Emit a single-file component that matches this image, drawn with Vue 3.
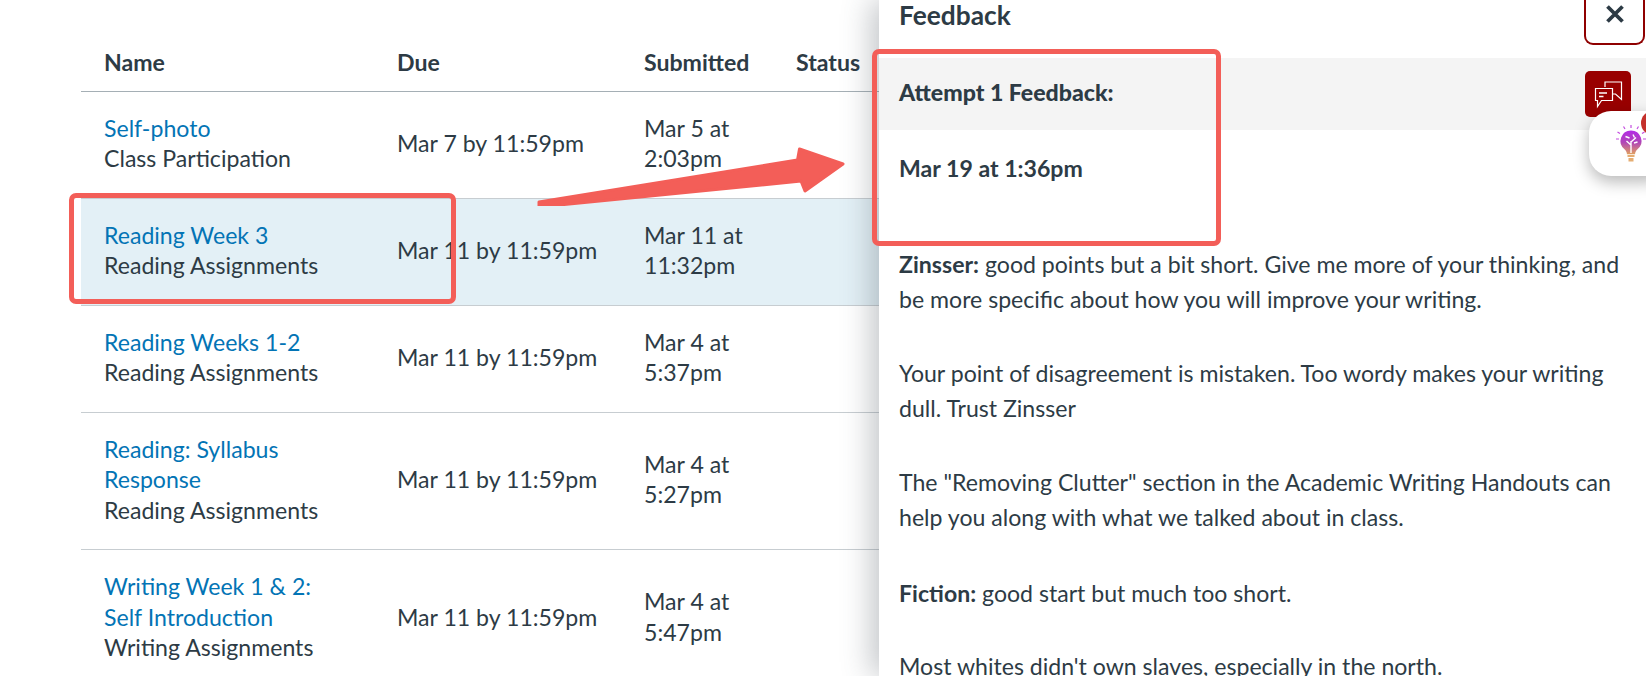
<template>
  <div class="page">
    <section class="grades">
      <div class="row head">
        <div>Name</div>
        <div>Due</div>
        <div>Submitted</div>
        <div>Status</div>
      </div>
      <div
        v-for="item in assignments"
        :key="item.title"
        class="row"
        :class="{ active: item.active }"
      >
        <div>
          <a class="link">{{ item.title }}</a>
          <div>{{ item.group }}</div>
        </div>
        <div>{{ item.due }}</div>
        <div class="submitted">{{ item.submitted }}</div>
        <div></div>
      </div>
    </section>

    <aside class="drawer">
      <header class="drawer-head">
        <h2>Feedback</h2>
        <button class="close" aria-label="Close">
          <svg width="22" height="22" viewBox="0 0 22 22">
            <path d="M3.500 3.500 18.500 18.500M18.500 3.500 3.500 18.500" stroke="#2d3b45" stroke-width="3.800" fill="none" />
          </svg>
        </button>
      </header>
      <div class="attempt">
        <strong>Attempt 1 Feedback:</strong>
        <button class="comment" aria-label="Comments">
          <svg width="46" height="46" viewBox="0 0 46 46" fill="none" stroke="#fff" stroke-width="1.200">
            <path d="M20 16v-5h16.500v17.500l-6-5.500h-2.500" />
            <path d="M10.500 17.500h17v12h-11l-4 6v-6h-2z" />
            <path d="M14 22h8M14 25.500h4.500" stroke-width="1.400" />
          </svg>
        </button>
      </div>
      <div class="date">Mar 19 at 1:36pm</div>
      <div class="comments">
        <p><b>Zinsser:</b> good points but a bit short. Give me more of your thinking, and be more specific about how you will improve your writing.</p>
        <p>Your point of disagreement is mistaken. Too wordy makes your writing dull. Trust Zinsser</p>
        <p class="gap">The "Removing Clutter" section in the Academic Writing Handouts can help you along with what we talked about in class.</p>
        <p><b>Fiction:</b> good start but much too short.</p>
        <p>Most whites didn't own slaves, especially in the north.</p>
      </div>
    </aside>

    <div class="helper">
      <span class="badge"></span>
      <svg width="30" height="38" viewBox="0 0 30 38">
        <defs>
          <linearGradient id="bulb" x1="0" y1="0" x2="0" y2="1">
            <stop offset="0" stop-color="#b32ce6" />
            <stop offset="0.5" stop-color="#b045b8" />
            <stop offset="1" stop-color="#e0a060" />
          </linearGradient>
        </defs>
        <path d="M15 5.500a10.500 10.500 0 0 0-6.500 18.700c1.500 1.300 2.300 3 2.500 5h8c.2-2 1-3.700 2.500-5a10.500 10.500 0 0 0-6.500-18.700z" fill="url(#bulb)" />
        <path d="M15 28V16M15 20l-4.500-4M15 17l5-4.500M9.500 11.500l4 1.500M17 9.500l1.500 3M21.500 17l-3.500 1" stroke="#fff" stroke-width="1.400" fill="none" />
        <path d="M11.500 30h7v2h-7zM12.500 33h5v3.500h-5z" fill="#e5ad72" />
        <path d="M15 0v3M7.500 1.500l1.500 2.500M22.500 1.500 21 4M1.500 7 4 8.500M28.500 7 26 8.500M0 14h3M27 14h3" stroke="#c44ce0" stroke-width="1.200" />
      </svg>
    </div>

    <div class="callout callout-row"></div>
    <div class="callout callout-attempt"></div>
    <svg class="arrow" width="320" height="60" viewBox="0 0 320 60">
      <path d="M2 56 260.500 14 262.500 3 306 18 268 45 264 35 2 61z" fill="#f35e58" stroke="#f35e58" stroke-width="3" stroke-linejoin="round" />
    </svg>
  </div>
</template>

<script setup>
const assignments = [
  { title: 'Self-photo', group: 'Class Participation', due: 'Mar 7 by 11:59pm', submitted: 'Mar 5 at 2:03pm' },
  { title: 'Reading Week 3', group: 'Reading Assignments', due: 'Mar 11 by 11:59pm', submitted: 'Mar 11 at 11:32pm', active: true },
  { title: 'Reading Weeks 1-2', group: 'Reading Assignments', due: 'Mar 11 by 11:59pm', submitted: 'Mar 4 at 5:37pm' },
  { title: 'Reading: Syllabus Response', group: 'Reading Assignments', due: 'Mar 11 by 11:59pm', submitted: 'Mar 4 at 5:27pm' },
  { title: 'Writing Week 1 & 2: Self Introduction', group: 'Writing Assignments', due: 'Mar 11 by 11:59pm', submitted: 'Mar 4 at 5:47pm' }
]
</script>

<style>
body {
  overflow: hidden;
  background: #fff;
}
</style>

<style scoped>
.page {
  position: relative;
  width: 1646px;
  height: 676px;
  overflow: hidden;
  font-family: Lato, "Open Sans", sans-serif;
  font-size: 23.1px;
  line-height: 30.5px;
  color: #2d3b45;
  background: #fff;
}

.grades {
  width: 810px;
  margin-left: 81px;
  padding-top: 47px;
}

.row {
  display: grid;
  grid-template-columns: 293px 247px 152px 1fr;
  align-items: center;
  padding: 21px 0 24px 23px;
  border-bottom: 1px solid #c7cdd1;
}

.row.head {
  padding: 0 0 13px 23px;
  font-weight: 700;
  border-bottom-color: #a5afb5;
}

.row.active {
  background: #e3f0f6;
}

.link {
  display: block;
  width: 225px;
  color: #0374b5;
}

.submitted {
  width: 112px;
}

.drawer {
  position: absolute;
  top: 0;
  right: 0;
  bottom: 0;
  width: 767px;
  background: #fff;
  box-shadow: -8px 0 28px rgba(70, 80, 90, 0.32);
}

.drawer-head {
  display: flex;
  justify-content: space-between;
  height: 58px;
  padding-left: 20px;
}

.drawer-head h2 {
  margin: 0;
  font-size: 26.3px;
  font-weight: 700;
  line-height: 31px;
}

.close {
  display: flex;
  align-items: center;
  justify-content: center;
  width: 61px;
  height: 45px;
  margin-right: 1px;
  padding: 0 0 15px;
  background: #fff;
  border: 2px solid #8f0000;
  border-top: 0;
  border-radius: 0 0 9px 9px;
}

.attempt {
  display: flex;
  align-items: center;
  justify-content: space-between;
  height: 72px;
  padding: 0 15px 0 20px;
  background: #f4f4f4;
  font-weight: 700;
}

.attempt strong {
  margin-top: -4px;
}

.comment {
  display: flex;
  align-items: center;
  justify-content: center;
  width: 46px;
  height: 46px;
  padding: 0;
  background: #990000;
  border: 0;
  border-radius: 5px;
}

.date {
  padding: 23px 20px 0;
  font-weight: 700;
}

.comments {
  padding: 63px 20px 0;
  line-height: 35.5px;
}

.comments p {
  margin: 0 0 38px;
}

.comments p.gap {
  margin-bottom: 40px;
}

.helper {
  position: absolute;
  top: 111px;
  left: 1589px;
  display: flex;
  align-items: center;
  width: 80px;
  height: 65px;
  padding-left: 27px;
  box-sizing: border-box;
  background: #fff;
  border-radius: 22px;
  box-shadow: 0 6px 16px rgba(0, 0, 0, 0.28);
}

.badge {
  position: absolute;
  top: 0;
  left: 52px;
  width: 24px;
  height: 24px;
  background: #c4302b;
  border-radius: 50%;
}

.callout {
  position: absolute;
  box-sizing: border-box;
  border: 5px solid #f35e58;
  border-radius: 7px;
}

.callout-row {
  top: 193px;
  left: 69px;
  width: 387px;
  height: 111px;
}

.callout-attempt {
  top: 49px;
  left: 872px;
  width: 349px;
  height: 197px;
}

.arrow {
  position: absolute;
  top: 146px;
  left: 537px;
}
</style>
